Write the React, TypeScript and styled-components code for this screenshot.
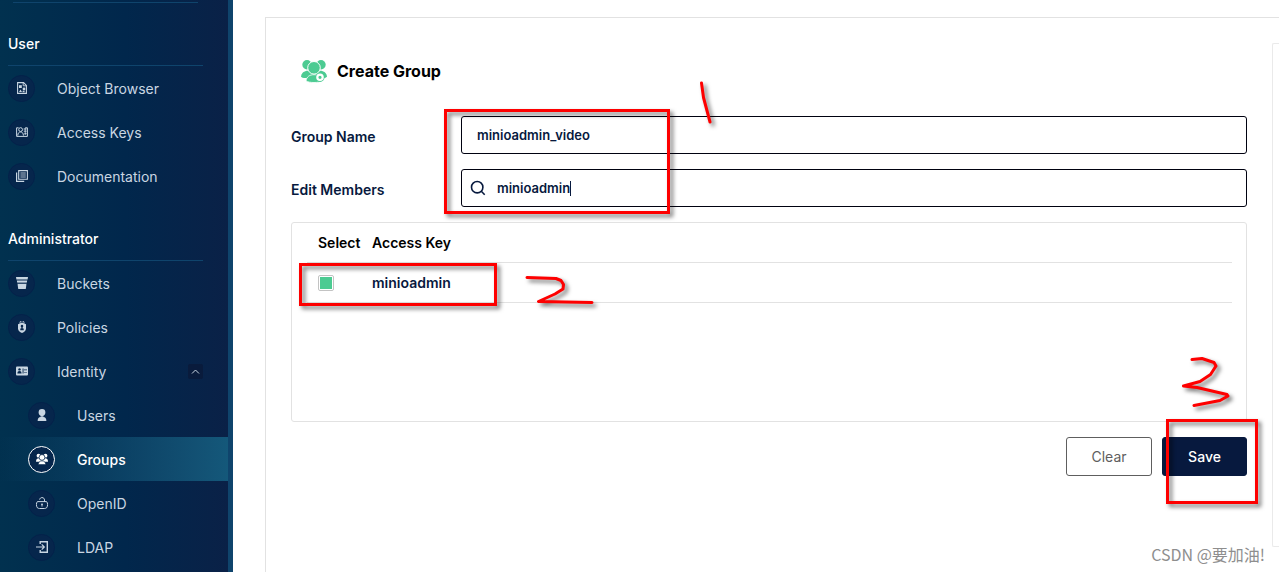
import React from "react";
import styled, { createGlobalStyle, css } from "styled-components";

const GlobalStyle = createGlobalStyle`
  * { box-sizing: border-box; }
  body {
    margin: 0;
    background: #fff;
    color: #000;
    font-family: Inter, "Liberation Sans", sans-serif;
    font-size: 14px;
    line-height: 20px;
  }
`;

const Page = styled.div`
  position: relative;
  display: grid;
  grid-template-columns: 233px minmax(0, 1fr);
  min-height: 100vh;
  overflow: hidden;
`;

/* ---------- sidebar ---------- */

const Sidebar = styled.nav`
  border-right: 5px solid #0f446c;
  background: linear-gradient(90deg, #01314f 0%, #01274c 55%, #0a2147 100%);
`;

const TopRule = styled.hr`
  height: 1px;
  margin: 2px 30px 2px 13px;
  border: 0;
  background: #0f446c;
`;

const SectionTitle = styled.h2`
  margin: 31px 25px 0 8px;
  padding-bottom: 11px;
  border-bottom: 1px solid #0f446c;
  color: #fff;
  font-size: 14px;
  font-weight: 500;
  line-height: 20px;
`;

const NavList = styled.ul`
  margin: 0;
  padding: 0;
  list-style: none;
`;

const NavLink = styled.a<{ $nested?: boolean; $active?: boolean }>`
  display: flex;
  align-items: center;
  gap: 22px;
  height: 44px;
  padding: 0 25px 0 ${(p) => (p.$nested ? 28 : 8)}px;
  color: ${(p) => (p.$active ? "#fff" : "#c9d6e2")};
  font-weight: ${(p) => (p.$active ? 500 : 400)};
  text-decoration: none;
  ${(p) =>
    p.$active &&
    css`
      background: linear-gradient(90deg, rgba(20, 88, 120, 0) 0%, #14587a 100%);
    `}
`;

const IconDisc = styled.span<{ $active?: boolean }>`
  display: flex;
  align-items: center;
  justify-content: center;
  width: 27px;
  height: 27px;
  border: 1px solid ${(p) => (p.$active ? "#fff" : "#04214a")};
  border-radius: 50%;
  background: #06264c;
`;

const NavText = styled.span`
  flex: 1;
  padding-top: 2px;
`;

const Expander = styled.span`
  display: flex;
  align-items: center;
  justify-content: center;
  width: 15px;
  height: 15px;
  border-radius: 2px;
  background: #091b3c;
`;

/* ---------- main area ---------- */

const Main = styled.main`
  display: flex;
  padding: 17px 0 0 32px;
`;

const Card = styled.section`
  flex: 1;
  display: grid;
  grid-template-columns: minmax(0, 1fr) 7px;
  align-items: start;
  gap: 25px;
  padding: 25px 0 25px 25px;
  border: 1px solid #e2e2e2;
  border-width: 1px 0 0 1px;
`;

const HelpPanel = styled.aside`
  min-height: 504px;
  border: 1px solid #eaeaea;
  border-right: 0;
  border-radius: 2px 0 0 2px;
`;

const Form = styled.form`
  position: relative;
`;

const Title = styled.h1`
  display: flex;
  align-items: center;
  gap: 10px;
  margin: 0;
  padding: 16px 0 33px 10px;
  font-size: 16px;
  font-weight: 700;
  line-height: 24px;
`;

const Fields = styled.div`
  display: grid;
  gap: 15px;
`;

const Field = styled.div`
  display: grid;
  grid-template-columns: 170px minmax(0, 1fr);
  align-items: center;
`;

const Label = styled.label`
  padding-top: 3px;
  color: #07193e;
  font-weight: 600;
`;

const InputWrap = styled.div`
  position: relative;
  display: flex;
`;

const TextInput = styled.input<{ $withIcon?: boolean }>`
  width: 100%;
  height: 38px;
  padding: 0 15px 0 ${(p) => (p.$withIcon ? 35 : 15)}px;
  border: 1px solid #000110;
  border-radius: 3px;
  background: #fff;
  color: #07193e;
  font-family: inherit;
  font-size: 13px;
  font-weight: 600;
  outline: none;
`;

const SearchMark = styled.svg`
  position: absolute;
  top: 11px;
  left: 9px;
`;

const Caret = styled.span`
  position: absolute;
  top: 12px;
  left: 109px;
  width: 1px;
  height: 15px;
  background: #07193e;
`;

const TableBox = styled.div`
  min-height: 200px;
  margin-top: 15px;
  padding: 0 14px 0 15px;
  border: 1px solid #e2e2e2;
  border-radius: 3px;
`;

const Table = styled.table`
  width: 100%;
  border-spacing: 0;
  table-layout: fixed;
`;

const cell = css`
  height: 40px;
  padding: 0;
  border-bottom: 1px solid #e2e2e2;
  font-weight: 600;
  text-align: left;
  vertical-align: middle;
`;

const HeadCell = styled.th<{ $select?: boolean }>`
  ${cell}
  ${(p) => p.$select && "width: 65px; padding-left: 11px;"}
`;

const BodyCell = styled.td<{ $select?: boolean }>`
  ${cell}
  color: #07193e;
  ${(p) => p.$select && "padding-left: 11px;"}
`;

const Checkbox = styled.input`
  display: block;
  appearance: none;
  width: 16px;
  height: 16px;
  margin: 0;
  padding: 1px;
  border: 1px solid #c3c3c3;
  border-radius: 2px;
  background: #fff;
  &:checked {
    background: #4ccb92 content-box;
  }
`;

const Actions = styled.div`
  display: flex;
  justify-content: flex-end;
  gap: 10px;
  margin-top: 15px;
`;

const Button = styled.button<{ $primary?: boolean }>`
  min-width: ${(p) => (p.$primary ? 85 : 86)}px;
  height: 39px;
  padding: 0 16px;
  border: 1px solid ${(p) => (p.$primary ? "#07193e" : "#5e5e5e")};
  border-radius: 3px;
  background: ${(p) => (p.$primary ? "#07193e" : "#fff")};
  color: ${(p) => (p.$primary ? "#fff" : "#5e5e5e")};
  font-family: inherit;
  font-size: 14px;
  font-weight: ${(p) => (p.$primary ? 500 : 400)};
`;

/* ---------- annotations over the form ---------- */

const marker = css`
  position: absolute;
  pointer-events: none;
  filter: drop-shadow(3px 3px 2px rgba(0, 0, 0, 0.55));
`;

const MarkBox = styled.div<{ $w: number; $h: number; $top: number; $left?: number; $right?: number }>`
  ${marker}
  top: ${(p) => p.$top}px;
  ${(p) => (p.$left !== undefined ? `left: ${p.$left}px;` : `right: ${p.$right}px;`)}
  width: ${(p) => p.$w}px;
  height: ${(p) => p.$h}px;
  border: 3px solid #fe0000;
`;

const Scribble = styled.svg<{ $top: number; $left?: number; $right?: number }>`
  ${marker}
  top: ${(p) => p.$top}px;
  ${(p) => (p.$left !== undefined ? `left: ${p.$left}px;` : `right: ${p.$right}px;`)}
  overflow: visible;
  fill: none;
  stroke: #fe0000;
  stroke-width: 3;
  stroke-linecap: round;
  stroke-linejoin: round;
`;

const Watermark = styled.div`
  position: absolute;
  right: 14px;
  bottom: 6px;
  color: #8e8e8e;
  font-family: "Noto Sans CJK SC", sans-serif;
  font-size: 16px;
  line-height: 24px;
`;

/* ---------- icons ---------- */

const glyphs: Record<string, React.ReactNode> = {
  browser: (
    <g>
      <path d="M1.6.6h6l2.8 2.8v8H1.6z" fill="none" stroke="currentColor" strokeWidth="1.1" />
      <path d="M7.2.8v3h3" fill="none" stroke="currentColor" strokeWidth=".9" />
      <rect x="3" y="3.2" width="2.8" height="2.8" />
      <circle cx="8" cy="7" r="1.4" />
      <path d="M3 10l1.5-2.4L6 10zM6.6 8.8h2v1.4h-2z" />
    </g>
  ),
  keys: (
    <g fill="none" stroke="currentColor">
      <path d="M2.6 1.8H.6v8.6h10.8V1.8H9.2" />
      <circle cx="4.6" cy="3.6" r="1.9" />
      <path d="M1.8 9.6c0-2.6 1.2-3.6 2.8-3.6s2.8 1 2.8 3.6" />
      <path d="M7.6 3h3M7.8 5.2h2.8M8.4 7.6h2.2M9.2 2v7" strokeWidth=".9" />
    </g>
  ),
  docs: (
    <g fill="none" stroke="currentColor">
      <path d="M2.7.6h8.7v8.6H2.7z" strokeWidth="1.1" />
      <path d="M.6 2.6v8.8h7.6" strokeWidth="1.2" />
      <path d="M4.4 3h5.4M4.4 5h5.4M4.4 7h5.4" strokeWidth=".9" />
    </g>
  ),
  bucket: (
    <g>
      <path d="M0 0h12l-.4 2.4H.4zM.8 3.4h10.4l-.4 2.2H1.2z" />
      <path d="M1.2 5.6h9.6l-.2 1H1.4z" opacity=".45" />
      <path d="M1.6 7h8.8L9.9 11.4q-.1.6-.8.6H2.9q-.7 0-.8-.6z" />
    </g>
  ),
  policy: (
    <g>
      <path d="M4 2.6V1.7a2 2 0 0 1 4 0v.9" fill="none" stroke="currentColor" strokeWidth=".9" />
      <path d="M6 1.6l4 1.6v4.2c0 2.2-1.8 3.8-4 4.6C3.8 11.2 2 9.6 2 7.4V3.2z" />
      <path d="M6 3.8a1.3 1.3 0 0 1 .7 2.4v1.2l1 .2v1.6H4.3V7.600l1-.2V6.200A1.300 1.300 0 0 1 6 3.800z" fill="#06264c" />
    </g>
  ),
  identity: (
    <g>
      <rect y="1.6" width="12" height="8.8" rx="1" />
      <g fill="#06264c">
        <circle cx="3.5" cy="4.4" r="1.2" />
        <path d="M1.4 8.6c0-1.800.8-2.600 2.100-2.600s2.100.8 2.100 2.600zM6.600 3.400h.9v5.200h-.9zM8 4.600h3v.7H8zM8 6.900h3v.7H8z" />
      </g>
    </g>
  ),
  user: (
    <g>
      <path d="M6 0a3.4 3.4 0 0 1 3.4 3.4C9.4 5 8.6 6.2 7.4 6.7v1h-2.8v-1C3.4 6.2 2.6 5 2.6 3.4A3.4 3.4 0 0 1 6 0z" />
      <path d="M1.6 12c0-2.600 1.200-3.900 3-3.900h2.800c1.800 0 3 1.300 3 3.900z" />
    </g>
  ),
  groups: (
    <g>
      <circle cx="2.5" cy="2.7" r="1.9" />
      <circle cx="9.5" cy="2.7" r="1.9" />
      <path d="M0 8.7C0 6.4 1 5.3 3 5.3h6c2 0 3 1.1 3 3.4z" />
      <circle cx="6" cy="4.4" r="2.9" stroke="#06264c" strokeWidth=".8" />
      <path d="M2.3 11.6c0-2.400 1.400-3.700 3.700-3.700s3.700 1.300 3.700 3.700z" stroke="#06264c" strokeWidth=".6" />
    </g>
  ),
  openid: (
    <g fill="none" stroke="currentColor">
      <path d="M1.4 4.6h9.2q1 1.2 1 3t-1 3.2q-1 .7-2.2.7H3.6q-1.200 0-2.200-.7-1-1.400-1-3.200t1-3z" strokeWidth="1" />
      <path d="M3.6 2.6C4 1.2 4.8.6 6 .6c1.5 0 2.5 1 2.5 2.400v1.600" strokeWidth="1" />
      <path d="M6 6.5v3M5.2 7.4h1.6" strokeWidth="1" />
    </g>
  ),
  ldap: (
    <g fill="none" stroke="currentColor" strokeWidth="1.4">
      <path d="M4.2 3V.7h7.100v10.600H4.200V9" />
      <path d="M0 6h8.2M5.7 3.4L8.3 6 5.7 8.6" strokeWidth="1.2" />
    </g>
  ),
};

const Glyph = ({ name }: { name: string }) => (
  <svg width="12" height="12" viewBox="0 0 12 12" fill="currentColor" aria-hidden="true">
    {glyphs[name]}
  </svg>
);

const CreateGroupIcon = () => (
  <svg width="26" height="24" viewBox="0 0 26 24" fill="#4ccb92" aria-hidden="true">
    <circle cx="6" cy="5.8" r="4.7" />
    <circle cx="20" cy="5.8" r="4.7" />
    <path d="M0 17.8C.4 14 3 11.800 7 11.800h12c4 0 6.600 2.200 7 6-1 .8-2 1.200-3 1.200H3c-1 0-2-.4-3-1.200z" />
    <circle cx="13" cy="8.8" r="6.300" stroke="#fff" strokeWidth="1" />
    <path d="M5 22c.6-4.200 3.400-6.300 8-6.300s7.400 2.100 8 6.300c-2 1-4.600 1.500-8 1.500S7 23 5 22z" stroke="#fff" strokeWidth=".8" />
    <circle cx="19" cy="18.300" r="4.600" />
    <circle cx="19" cy="18.300" r="2.700" fill="#4ccb92" stroke="#fff" strokeWidth="2.200" />
  </svg>
);

type Item = { icon: string; text: string; nested?: boolean; active?: boolean; open?: boolean };

const userItems: Item[] = [
  { icon: "browser", text: "Object Browser" },
  { icon: "keys", text: "Access Keys" },
  { icon: "docs", text: "Documentation" },
];

const adminItems: Item[] = [
  { icon: "bucket", text: "Buckets" },
  { icon: "policy", text: "Policies" },
  { icon: "identity", text: "Identity", open: true },
  { icon: "user", text: "Users", nested: true },
  { icon: "groups", text: "Groups", nested: true, active: true },
  { icon: "openid", text: "OpenID", nested: true },
  { icon: "ldap", text: "LDAP", nested: true },
];

const Menu = ({ items }: { items: Item[] }) => (
  <NavList>
    {items.map((item) => (
      <li key={item.text}>
        <NavLink href="#" $nested={item.nested} $active={item.active}>
          <IconDisc $active={item.active}>
            <Glyph name={item.icon} />
          </IconDisc>
          <NavText>{item.text}</NavText>
          {item.open && (
            <Expander>
              <svg width="9" height="5" viewBox="0 0 9 5" fill="none" stroke="currentColor" aria-hidden="true">
                <path d="M1 4.5L4.5 1 8 4.5" />
              </svg>
            </Expander>
          )}
        </NavLink>
      </li>
    ))}
  </NavList>
);

export default function App() {
  return (
    <Page>
      <GlobalStyle />
      <Sidebar>
        <TopRule />
        <SectionTitle>User</SectionTitle>
        <Menu items={userItems} />
        <SectionTitle>Administrator</SectionTitle>
        <Menu items={adminItems} />
      </Sidebar>

      <Main>
        <Card>
          <Form onSubmit={(e) => e.preventDefault()}>
            <Title>
              <CreateGroupIcon />
              Create Group
            </Title>
            <Fields>
              <Field>
                <Label htmlFor="group-name">Group Name</Label>
                <InputWrap>
                  <TextInput id="group-name" defaultValue="minioadmin_video" />
                </InputWrap>
              </Field>
              <Field>
                <Label htmlFor="members">Edit Members</Label>
                <InputWrap>
                  <TextInput id="members" $withIcon defaultValue="minioadmin" />
                  <SearchMark width="16" height="16" viewBox="0 0 16 16" fill="none" stroke="#07193e" strokeWidth="1.6" aria-hidden="true">
                    <circle cx="7.2" cy="7.2" r="5.7" />
                    <path d="M11.3 11.3l3.4 3.4" />
                  </SearchMark>
                  <Caret />
                </InputWrap>
              </Field>
            </Fields>

            <TableBox>
              <Table>
                <thead>
                  <tr>
                    <HeadCell $select>Select</HeadCell>
                    <HeadCell>Access Key</HeadCell>
                  </tr>
                </thead>
                <tbody>
                  <tr>
                    <BodyCell $select>
                      <Checkbox type="checkbox" defaultChecked aria-label="Select minioadmin" />
                    </BodyCell>
                    <BodyCell>minioadmin</BodyCell>
                  </tr>
                </tbody>
              </Table>
            </TableBox>

            <Actions>
              <Button type="reset">Clear</Button>
              <Button type="submit" $primary>
                Save
              </Button>
            </Actions>

            <MarkBox $left={153} $top={66} $w={226} $h={105} />
            <MarkBox $left={8} $top={220} $w={198} $h={43} />
            <MarkBox $right={-11} $top={376} $w={92} $h={85} />
            <Scribble $left={405} $top={35} width="20" height="50" viewBox="0 0 20 50" aria-hidden="true">
              <polyline points="5.5,5 7.5,19.5 14,44" />
            </Scribble>
            <Scribble $left={231} $top={229} width="76" height="36" viewBox="0 0 76 36" aria-hidden="true">
              <polyline points="5,5.5 34,6.5 39,8.5 41.5,12.5 41,17 33,22 16.5,29.5 70,30.5" />
            </Scribble>
            <Scribble $right={11} $top={311} width="60" height="56" viewBox="0 0 60 56" aria-hidden="true">
              <polyline points="16,5.5 26,4.5 38,8.5 40,12 34.5,20.5 24,27.5 7.5,32 21,33.5 51,40.5 52,42 44,46.5 18,51.5" />
            </Scribble>
          </Form>
          <HelpPanel aria-label="Help" />
        </Card>
      </Main>
      <Watermark>CSDN @要加油!</Watermark>
    </Page>
  );
}
